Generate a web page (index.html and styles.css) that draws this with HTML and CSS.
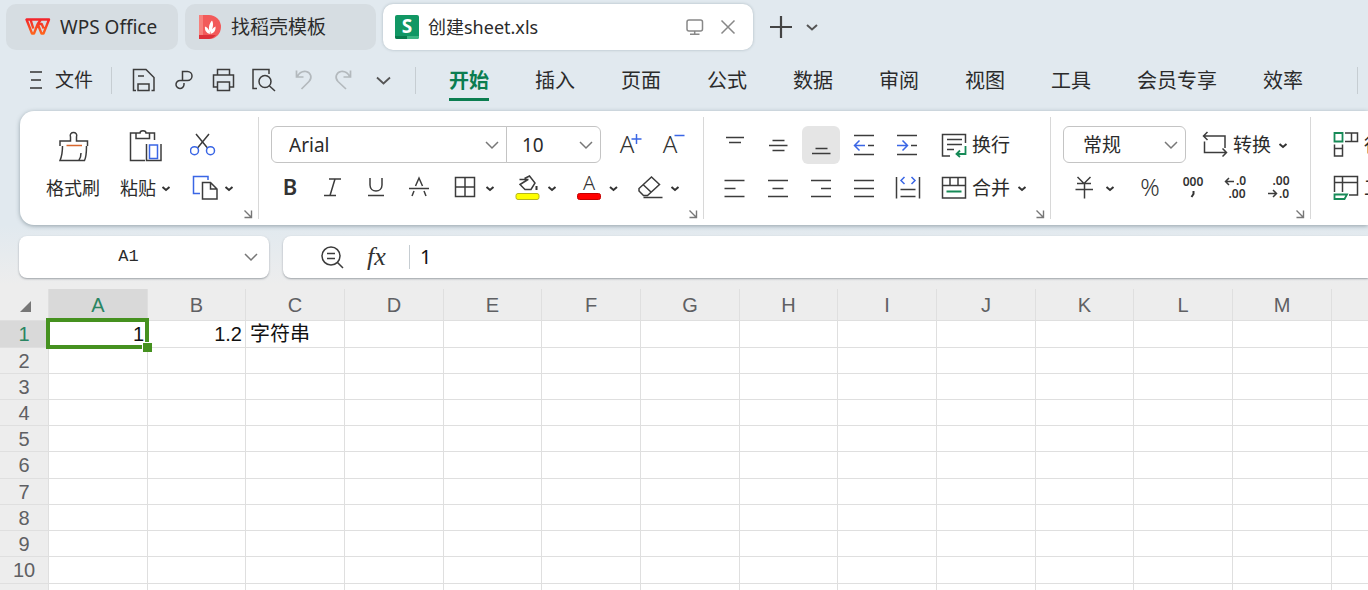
FILE: index.html
```html
<!DOCTYPE html>
<html lang="zh-CN">
<head>
<meta charset="utf-8">
<title>创建sheet.xls</title>
<link rel="stylesheet" href="styles.css">
</head>
<body>
<svg class="defs" aria-hidden="true">
  <symbol id="caret" viewBox="0 0 14 38"><path d="M3.500 18l3.500 3 3.500-3" fill="none" stroke="#333" stroke-width="2"/></symbol>
  <symbol id="drop" viewBox="0 0 14 10"><path d="M1 2l6 6 6-6" fill="none" stroke="#777" stroke-width="1.500"/></symbol>
  <symbol id="launch" viewBox="0 0 10 10"><path d="M1.500 1.500l6.500 6.500M8.500 1.500v7h-7" fill="none" stroke="#777" stroke-width="1.400"/></symbol>
</svg>

<header class="tabs">
  <button class="tab tab-home">
    <svg width="26" height="20" viewBox="0 0 26 20"><defs><linearGradient id="w" gradientUnits="userSpaceOnUse" x1="0" y1="1" x2="0" y2="18"><stop offset="0" stop-color="#f2202c"/><stop offset="1" stop-color="#ff6a1c"/></linearGradient></defs><path d="M1.500 2.500h22.500l-5.500 14h-2l-3.800-9.500-3.700 9.500h-2zM5.500 2.500l2.800 9M16 2.500l-3.300 4.500M12.700 7h4l2 4.500" fill="none" stroke="url(#w)" stroke-width="2.400" stroke-linejoin="round"/></svg>
    <span>WPS Office</span>
  </button>
  <button class="tab tab-docer">
    <svg width="24" height="26" viewBox="0 0 24 26"><path d="M1 1h10a12 12 0 0 1 0 24H1z" fill="#f25a5a"/><path d="M1 21h17a12 12 0 0 1-7 4H1z" fill="#dd3039"/><path d="M1 1h4v20H1z" fill="#f7807c"/><path d="M12 20c-4-1-5.500-4-5-7.500 3 1 4.500 3.500 5 7.500zM12 19c-2-5-1-9 2-12.500 2 3.500 1 8-2 12.500zM12.500 20c.5-4 2-6 5-7.500 .5 4-1.500 6.500-5 7.500z" fill="#fff"/></svg>
    <span>找稻壳模板</span>
  </button>
  <div class="tab tab-file">
    <svg width="24" height="24" viewBox="0 0 24 24"><rect width="24" height="24" rx="2" fill="#119764"/><path d="M0 21h12v3H2a2 2 0 0 1-2-2z" fill="#087a4c"/><path d="M12 21h12v1a2 2 0 0 1-2 2H12z" fill="#3db583"/><text x="12" y="18" class="logo-letter">S</text></svg>
    <span class="file-name">创建sheet.xls</span>
    <button class="mini" aria-label="窗口"><svg width="18" height="18" viewBox="0 0 18 18" fill="none" stroke="#888" stroke-width="1.500"><rect x="1" y="2" width="15.500" height="11" rx="2"/><path d="M8.700 13v3M4 16.200h9.500"/></svg></button>
    <button class="mini" aria-label="关闭"><svg width="18" height="18" viewBox="0 0 18 18"><path d="M2.500 2.500l13 13M15.500 2.500l-13 13" stroke="#888" stroke-width="1.500"/></svg></button>
  </div>
  <button class="mini add" aria-label="新建"><svg width="24" height="24" viewBox="0 0 24 24"><path d="M12 1v22M1 12h22" stroke="#444" stroke-width="2.200"/></svg></button>
  <button class="mini" aria-label="标签列表"><svg width="14" height="14" viewBox="0 0 14 14"><path d="M2 5l5 4.500L12 5" fill="none" stroke="#555" stroke-width="2"/></svg></button>
</header>

<nav class="menu">
  <button class="file-menu"><svg width="16" height="20" viewBox="0 0 16 20"><path d="M1 2h12M2 10h10M1 18h12" stroke="#333" stroke-width="1.500"/></svg>文件</button>
  <span class="rule"></span>
  <div class="quick">
    <button class="ib" aria-label="保存"><svg viewBox="0 0 38 38"><path d="M12 29.500H9.500V8.500H22l8 8v13h-2.500M14 29.500v-6.500h11v6.500zM14 15h6"/></svg></button>
    <button class="ib" aria-label="分享"><svg viewBox="0 0 38 38"><path d="M18.500 20V10.500h5a4.200 4.200 0 0 1 0 9h-7a4 4 0 1 0 3.500 4V22"/></svg></button>
    <button class="ib" aria-label="打印"><svg viewBox="0 0 38 38"><path d="M13.500 14V8.500h12V14M13 26H9.500V14h20v12H26M13.500 21h12v8.500h-12z"/></svg></button>
    <button class="ib" aria-label="打印预览"><svg viewBox="0 0 38 38"><path d="M13 27.500H9V8.500h16V13"/><circle cx="21" cy="20.500" r="6"/><path d="M25.500 25l5.500 5"/></svg></button>
    <button class="ib" aria-label="撤销" disabled><svg viewBox="0 0 38 38"><path class="faint" d="M12.500 9.500v6.500h7M13 16c2-4 5-6 9-5.500 5 1 6.500 6.500 3 10L17.500 28"/></svg></button>
    <button class="ib" aria-label="恢复" disabled><svg viewBox="0 0 38 38"><path class="faint" d="M26.500 9.500v6.500h-7M26 16c-2-4-5-6-9-5.500-5 1-6.500 6.500-3 10L22 28"/></svg></button>
    <button class="ib" aria-label="更多"><svg viewBox="0 0 38 38"><path class="mid" d="M13 16.500l6.500 6 6.500-6"/></svg></button>
  </div>
  <span class="rule"></span>
  <div class="menu-tabs">
    <a href="#" class="on">开始</a><a href="#">插入</a><a href="#">页面</a><a href="#">公式</a><a href="#">数据</a><a href="#">审阅</a><a href="#">视图</a><a href="#">工具</a><a href="#">会员专享</a><a href="#">效率</a>
  </div>
  <span class="rule"></span>
</nav>

<section class="ribbon">
  <div class="group clip">
    <button class="big"><svg class="i38" viewBox="0 0 38 38"><path d="M6 20v-5h10.500v-4c-2-6 8-6 6 0v4H33.500v5M8.500 20c0 6-.5 10-2.500 14.500h24.500c2-4 2-9 2-14.500M25 34c1.500-2 2-4 2-7"/><path class="orange" d="M12.500 19.500h15.500"/></svg><span>格式刷</span></button>
    <button class="big"><svg class="i38" viewBox="0 0 38 38"><path d="M10 7H4.500v27.500H19M10 7v5.500h13.500V7h-3.500c0-3-6-3-6 0zM23.500 7H28.500v7M20.500 18v16.500h14.500V18"/><path class="blue" d="M23.500 19h8v13.500h-8z"/></svg><span>粘贴<svg class="caret"><use href="#caret"/></svg></span></button>
    <div class="stack">
      <button aria-label="剪切"><svg class="i46" viewBox="0 0 46 38"><path d="M6 8l11.500 14M19 8L7.500 22"/><path class="blue" d="M8.500 24.700a4 4 0 1 1-8 0 4 4 0 0 1 8 0zM24.500 24.700a4 4 0 1 1-8 0 4 4 0 0 1 8 0z"/></svg></button>
      <button aria-label="复制"><svg class="i46" viewBox="0 0 46 38"><path class="blue" d="M10 24.500H3.500v-17h14.500V11"/><path d="M12.500 13.500h8l6.500 6.500v10H12.500zM20.500 13.500V20H27"/><path class="bold" d="M35.500 18l3.500 3 3.500-3"/></svg></button>
    </div>
    <button class="launch" aria-label="剪贴板设置"><svg width="10" height="10"><use href="#launch"/></svg></button>
  </div>

  <div class="group font">
    <div class="stack">
      <div class="row">
        <div class="pick pick-font"><select aria-label="字体"><option>Arial</option></select><svg width="14" height="10"><use href="#drop"/></svg></div>
        <div class="pick pick-size"><select aria-label="字号"><option>10</option></select><svg width="14" height="10"><use href="#drop"/></svg></div>
        <button class="ib grow" aria-label="增大字号"><svg viewBox="0 0 38 38"><text x="16" y="27" class="letter">A</text><path class="blue" d="M20.500 13h10M25.500 8v10"/></svg></button>
        <button class="ib" aria-label="减小字号"><svg viewBox="0 0 38 38"><text x="16" y="27" class="letter">A</text><path class="blue" d="M20.500 9.500h10"/></svg></button>
      </div>
      <div class="row">
        <button class="ib" aria-label="加粗"><svg viewBox="0 0 38 38"><text x="19" y="26" class="letter strong">B</text></svg></button>
        <button class="ib" aria-label="倾斜"><svg viewBox="0 0 38 38"><path d="M15 10h12M10 26.500h12M21 10l-5 16.500"/></svg></button>
        <button class="ib" aria-label="下划线"><svg viewBox="0 0 38 38"><path d="M13 9v7c0 8 12 8 12 0V9M11 26.500h16"/></svg></button>
        <button class="ib" aria-label="删除线"><svg viewBox="0 0 38 38"><path d="M15.500 17L19 9l3.500 8M9 19.500h20M14 22l-2 5M24 22l2 5"/></svg></button>
        <button class="split" aria-label="边框"><svg viewBox="0 0 57 38"><path d="M12.500 8.500h19v19h-19zM22 8.500v19M12.500 18h19"/><path class="bold" d="M43.500 18l3.500 3 3.500-3"/></svg></button>
        <button class="split" aria-label="填充颜色"><svg viewBox="0 0 57 38"><path d="M14.500 10.500h9M19.500 9.500l5-2.500 5.500 7-4 6.500h-6l-5-5 8-5"/><path class="bold" d="M31.500 17v4"/><rect x="11" y="24.500" width="23" height="6" rx="2" fill="#ff0" stroke="#b5b520"/><path class="bold" d="M43.500 18l3.500 3 3.500-3"/></svg></button>
        <button class="split" aria-label="字体颜色"><svg viewBox="0 0 57 38"><text x="22" y="21" class="letter small">A</text><rect x="10.500" y="24.500" width="23" height="6" rx="2" fill="#f00" stroke="#c30000"/><path class="bold" d="M43 18l3.500 3 3.500-3"/></svg></button>
        <button class="split" aria-label="清除"><svg viewBox="0 0 57 38"><path d="M22.500 8l8 7.500-12 11h-4l-4.500-4.500v-2.500zM14 15.500l8.500 8M14.500 28.500h19"/><path class="bold" d="M42.500 18l3.500 3 3.500-3"/></svg></button>
      </div>
    </div>
    <button class="launch" aria-label="字体设置"><svg width="10" height="10"><use href="#launch"/></svg></button>
  </div>

  <div class="group align">
    <div class="stack">
      <div class="row">
        <button class="ib" aria-label="顶端对齐"><svg viewBox="0 0 38 38"><path d="M10 11.500h18M13 16.500h12"/></svg></button>
        <button class="ib" aria-label="垂直居中"><svg viewBox="0 0 38 38"><path d="M13.500 14.500h12M10 19.500h18.500M13.500 24.500h12"/></svg></button>
        <button class="ib pressed" aria-label="底端对齐" aria-pressed="true"><svg viewBox="0 0 38 38"><path d="M13.500 22.500h12M10 27.500h18.500"/></svg></button>
        <button class="ib" aria-label="减少缩进"><svg viewBox="0 0 38 38"><path d="M9 9.500h20M9 28.500h20M23 19.500h6"/><path class="blue" d="M20 19.500H10M14.500 14.500l-5 5 5 5"/></svg></button>
        <button class="ib" aria-label="增加缩进"><svg viewBox="0 0 38 38"><path d="M9 9.500h20M9 28.500h20M23 19.500h6"/><path class="blue" d="M9 19.500h10M14.500 14.500l5 5-5 5"/></svg></button>
        <button class="labelled"><svg class="i38" viewBox="0 0 38 38"><path d="M19 30H11.500V8.500h23V17M16 13.500h15M16 18.500h15M16 23.500h7"/><path class="green" d="M34.500 20v8H26M29 24.500l-3.500 3.500 3.500 3"/></svg><span>换行</span></button>
      </div>
      <div class="row">
        <button class="ib" aria-label="左对齐"><svg viewBox="0 0 38 38"><path d="M8.500 11.500h20M8.500 19.500h11M8.500 27.500h20"/></svg></button>
        <button class="ib" aria-label="水平居中"><svg viewBox="0 0 38 38"><path d="M9 11.500h20M13.500 19.500h11M9 27.500h20"/></svg></button>
        <button class="ib" aria-label="右对齐"><svg viewBox="0 0 38 38"><path d="M9 11.500h20M19 19.500h10M9 27.500h20"/></svg></button>
        <button class="ib" aria-label="两端对齐"><svg viewBox="0 0 38 38"><path d="M9 11.500h20M9 19.500h20M9 27.500h20"/></svg></button>
        <button class="ib" aria-label="分散对齐"><svg viewBox="0 0 38 38"><path d="M8.500 8v21.500M31.500 8v21.500M12.500 20.500h15M12.500 27.500h15"/><path class="blue" d="M16.500 8L13 11.500l3.500 3.500M23.500 8l3.500 3.500-3.500 3.500"/></svg></button>
        <button class="labelled"><svg class="i38" viewBox="0 0 38 38"><path d="M11.500 8.500h23v20.500h-23zM11.500 16.500h23M19 8.500v8M27 8.500v8"/><path class="green" d="M15.500 22.500h15"/></svg><span>合并</span><svg class="caret"><use href="#caret"/></svg></button>
      </div>
    </div>
    <button class="launch" aria-label="对齐设置"><svg width="10" height="10"><use href="#launch"/></svg></button>
  </div>

  <div class="group number">
    <div class="stack">
      <div class="row">
        <div class="pick pick-format"><select aria-label="数字格式"><option>常规</option></select><svg width="14" height="10"><use href="#drop"/></svg></div>
        <button class="labelled convert"><svg class="i38" viewBox="0 0 38 38"><path d="M12.500 6l-4 4 4 4M8.500 10H30v12M9.500 15.500v11h21.500M27.500 22.500l4 4-4 4"/></svg><span>转换</span><svg class="caret"><use href="#caret"/></svg></button>
      </div>
      <div class="row">
        <button class="split wide" aria-label="货币"><svg viewBox="0 0 63 38"><path d="M14.500 8l6.500 6.500L27.500 8M14 14.500h14M12.500 20.500h17.500M21.500 14.500V29.500"/><path class="bold" d="M43.500 18l3.500 3 3.500-3"/></svg></button>
        <button class="ib" aria-label="百分比"><svg viewBox="0 0 38 38"><text x="19" y="27" class="letter">%</text></svg></button>
        <button class="ib" aria-label="千位分隔"><svg viewBox="0 0 38 38"><text x="19" y="17" class="digits">000</text><path class="bold" d="M19.500 22v3l-2 3"/></svg></button>
        <button class="ib" aria-label="增加小数位"><svg viewBox="0 0 38 38"><text x="24" y="16" class="digits">.0</text><text x="20" y="29" class="digits">.00</text><path d="M17 12.500H9M12 9l-3.500 3.500L12 16"/></svg></button>
        <button class="ib" aria-label="减少小数位"><svg viewBox="0 0 38 38"><text x="21" y="16" class="digits">.00</text><text x="24" y="29" class="digits">.0</text><path d="M8 24.500h8M13 21l3.500 3.500L13 28"/></svg></button>
      </div>
    </div>
    <button class="launch" aria-label="数字设置"><svg width="10" height="10"><use href="#launch"/></svg></button>
  </div>

  <div class="group cells">
    <div class="stack">
      <button class="labelled flush"><svg class="i38" viewBox="0 0 38 38"><path d="M19 7h12.500v8.500H19M25.500 7v8.500M8.500 18.500v11.500h8V18.500M8.500 22.500h8"/><path class="green" d="M8.500 7h8v8.500h-8z"/></svg><span>行和列</span><svg class="caret"><use href="#caret"/></svg></button>
      <button class="labelled flush"><svg class="i38" viewBox="0 0 38 38"><path d="M8.500 23V7.500h23V26H23M8.500 13.500h23M16.500 7.500v15.500"/><path class="green" d="M8.500 25.500h12.500l-2.500 4.500h-10z"/></svg><span>工作表</span><svg class="caret"><use href="#caret"/></svg></button>
    </div>
  </div>
</section>

<section class="formula">
  <div class="name-box"><input type="text" value="A1" aria-label="名称框"><svg width="14" height="10"><use href="#drop"/></svg></div>
  <div class="entry">
    <button class="ib" aria-label="查找"><svg viewBox="0 0 38 38"><circle cx="18" cy="18" r="9"/><path d="M24.500 24.500l5.500 5.500M14 15.500h8M14 20.500h8"/></svg></button>
    <button class="fx" aria-label="插入函数">fx</button>
    <span class="rule short"></span>
    <input type="text" value="1" aria-label="编辑栏">
  </div>
</section>

<main class="sheet">
  <table>
    <colgroup><col class="head"><col><col class="n"><col><col><col class="n"><col><col><col class="n"><col><col><col class="n"><col><col><col class="n"></colgroup>
    <thead>
      <tr><th class="corner"><svg width="12" height="12" viewBox="0 0 12 12"><path d="M11 0v11H0z" fill="#777"/></svg></th><th class="on">A</th><th>B</th><th>C</th><th>D</th><th>E</th><th>F</th><th>G</th><th>H</th><th>I</th><th>J</th><th>K</th><th>L</th><th>M</th><th>N</th></tr>
    </thead>
    <tbody>
      <tr class="tall"><th class="on">1</th><td class="num">1<span class="selection"></span></td><td class="num">1.2</td><td class="text">字符串</td><td></td><td></td><td></td><td></td><td></td><td></td><td></td><td></td><td></td><td></td><td></td></tr>
      <tr><th>2</th><td></td><td></td><td></td><td></td><td></td><td></td><td></td><td></td><td></td><td></td><td></td><td></td><td></td><td></td></tr>
      <tr><th>3</th><td></td><td></td><td></td><td></td><td></td><td></td><td></td><td></td><td></td><td></td><td></td><td></td><td></td><td></td></tr>
      <tr><th>4</th><td></td><td></td><td></td><td></td><td></td><td></td><td></td><td></td><td></td><td></td><td></td><td></td><td></td><td></td></tr>
      <tr><th>5</th><td></td><td></td><td></td><td></td><td></td><td></td><td></td><td></td><td></td><td></td><td></td><td></td><td></td><td></td></tr>
      <tr class="tall"><th>6</th><td></td><td></td><td></td><td></td><td></td><td></td><td></td><td></td><td></td><td></td><td></td><td></td><td></td><td></td></tr>
      <tr><th>7</th><td></td><td></td><td></td><td></td><td></td><td></td><td></td><td></td><td></td><td></td><td></td><td></td><td></td><td></td></tr>
      <tr><th>8</th><td></td><td></td><td></td><td></td><td></td><td></td><td></td><td></td><td></td><td></td><td></td><td></td><td></td><td></td></tr>
      <tr><th>9</th><td></td><td></td><td></td><td></td><td></td><td></td><td></td><td></td><td></td><td></td><td></td><td></td><td></td><td></td></tr>
      <tr class="tall"><th>10</th><td></td><td></td><td></td><td></td><td></td><td></td><td></td><td></td><td></td><td></td><td></td><td></td><td></td><td></td></tr>
      <tr><th>11</th><td></td><td></td><td></td><td></td><td></td><td></td><td></td><td></td><td></td><td></td><td></td><td></td><td></td><td></td></tr>
    </tbody>
  </table>
</main>
</body>
</html>
```

FILE: styles.css
```css
* { box-sizing: border-box; }
body {
  margin: 0;
  height: 100vh;
  overflow: hidden;
  display: flex;
  flex-direction: column;
  font-family: "Noto Sans", "Noto Sans CJK SC", sans-serif;
  font-size: 19px;
  line-height: 28px;
  color: #2b2b2b;
  background: linear-gradient(#e1e9ef 0, #e1e9ef 225px, #ededed 285px);
}
.defs { position: absolute; width: 0; height: 0; }
button {
  margin: 0;
  padding: 0;
  border: 0;
  background: none;
  font: inherit;
  color: inherit;
  display: flex;
  align-items: center;
}
svg { display: block; flex: none; }
input, select { font: inherit; color: inherit; border: 0; outline: 0; background: none; min-width: 0; }

/* document tabs */
.tabs { display: flex; align-items: center; gap: 7px; padding: 4px 0 4px 6px; flex: none; }
.tab { height: 46px; border-radius: 10px; background: #d6dde2; gap: 9px; font-size: 18px; }
.tab-home { width: 172px; padding-left: 19px; font-size: 19px; }
.tab-docer { width: 191px; padding-left: 13px; font-size: 19px; }
.tab-file {
  display: flex;
  align-items: center;
  width: 370px;
  padding: 0 16px 0 12px;
  background: #fff;
  box-shadow: 0 0 3px rgba(90, 110, 120, .4);
}
.file-name { flex: 1; white-space: nowrap; }
.mini { flex: none; }
.tab-file .mini + .mini { margin-left: 6px; }
.add { margin: 0 5px 0 9px; }

/* menu bar */
.menu { display: flex; align-items: center; height: 52px; flex: none; padding-left: 29px; }
.file-menu { gap: 10px; }
.rule { width: 1px; height: 27px; background: #c6cdd2; flex: none; }
.file-menu + .rule { margin: 0 12px 0 18px; }
.quick { display: flex; gap: 2px; }
.quick + .rule { margin: 0 33px 0 13px; }
.menu-tabs { display: flex; gap: 46px; margin-right: 54px; font-size: 20px; }
.menu-tabs a { flex: none; color: inherit; text-decoration: none; padding-top: 4px; border-bottom: 3px solid transparent; line-height: 34px; }
.menu-tabs .on { color: #0b7d50; font-weight: 700; border-color: #0b7d50; }

/* icon buttons */
.ib, .ib svg { width: 38px; height: 38px; flex: none; }
.split, .split svg { width: 57px; height: 38px; flex: none; }
.wide, .wide svg { width: 63px; }
.i38 { width: 38px; height: 38px; }
.i46 { width: 46px; height: 38px; }
.caret { width: 14px; height: 38px; }
.ib path, .split path, .i38 path, .i46 path, .ib circle { fill: none; stroke: #3c3c3c; stroke-width: 1.5; }
.ib .faint { stroke: #b3b9bd; stroke-width: 1.7; }
.ib .mid { stroke: #555; stroke-width: 1.8; }
.ribbon .bold { stroke: #333; stroke-width: 2; }
.ribbon .blue { stroke: #3a66e5; }
.ribbon .green { stroke: #168a57; stroke-width: 1.8; }
.ribbon .orange { stroke: #d8662d; }
.letter { font-size: 24px; font-weight: 300; text-anchor: middle; fill: #333; }
.small { font-size: 20px; }
.strong { font-size: 22px; font-weight: 600; }
.digits { font-size: 12px; font-weight: 600; text-anchor: middle; fill: #333; }
.logo-letter { font-size: 19px; font-weight: 700; text-anchor: middle; fill: #fff; }

/* ribbon */
.ribbon {
  display: flex;
  flex: none;
  margin: 5px 0 0 20px;
  padding: 6px 0;
  overflow: hidden;
  background: #fff;
  border-radius: 14px 0 0 14px;
  box-shadow: 0 1px 4px rgba(70, 90, 100, .5);
}
.group {
  position: relative;
  display: flex;
  flex: none;
  padding: 9px 12px 12px 12px;
  border-right: 1px solid #d8d8d8;
}
.clip { gap: 20px; padding-left: 26px; padding-right: 22px; }
.font { padding-right: 11px; }
.align { padding-right: 21px; }
.cells { padding-left: 15px; border: 0; }
.stack, .big { display: flex; flex-direction: column; gap: 5px; }
.row { display: flex; gap: 5px; }
.big { font-size: 18px; }
.big span { display: flex; align-items: center; height: 38px; }
.big .caret { margin: 0 -3px 0 3px; }
.labelled { height: 38px; }
.labelled span { margin: 0 5px 0 3px; white-space: nowrap; }
.convert { margin-left: 4px; }
.convert span, .flush span { margin-left: 0; }
.pressed { background: #e5e5e5; border-radius: 6px; }
.launch { position: absolute; right: 5px; bottom: 0; }

.pick {
  display: flex;
  align-items: center;
  height: 37px;
  padding-right: 7px;
  border: 1px solid #c4c4c4;
  border-radius: 6px;
}
.pick select { flex: 1; appearance: none; height: 35px; padding: 0 0 0 17px; }
.pick-font { width: 236px; border-radius: 6px 0 0 6px; margin-right: -6px; }
.pick-size { width: 95px; border-radius: 0 6px 6px 0; }
.pick-size select { padding-left: 15px; }
.pick-format { width: 123px; }
.pick-format select { padding-left: 19px; }
.grow { margin-left: 5px; }

/* formula bar */
.formula { display: flex; flex: none; gap: 14px; margin: 11px 0 11px 19px; height: 42px; }
.name-box, .entry {
  display: flex;
  align-items: center;
  background: #fff;
  border-radius: 8px;
  box-shadow: 0 1px 2px rgba(80, 90, 100, .5);
}
.name-box { width: 250px; padding-right: 11px; }
.name-box input { flex: 1; text-align: center; padding: 0 6px 0 0; font-family: "Liberation Mono", monospace; font-size: 17px; }
.entry { flex: 1; padding-left: 30px; border-radius: 8px 0 0 8px; }
.entry input { flex: 1; padding: 0 0 0 10px; font-size: 20px; color: #111; }
.fx { margin-left: 16px; width: 26px; font: italic 26px/30px "Liberation Serif", serif; color: #333; }
.short { margin-left: 16px; height: 24px; }

/* grid */
.sheet { flex: 1; overflow: hidden; font-family: "Liberation Sans", "Noto Sans CJK SC", sans-serif; font-size: 20px; line-height: 24px; }
table { width: 1430px; table-layout: fixed; border-collapse: separate; border-spacing: 0; background: #fff; }
col { width: 99px; }
.n { width: 98px; }
.head { width: 49px; }
th, td { height: 26px; padding: 0; border-right: 1px solid #dfdfdf; border-bottom: 1px solid #dfdfdf; }
.tall th, .tall td { height: 27px; }
th { font-weight: 400; color: #5f6063; background: #ededed; }
thead th { height: 32px; }
.corner svg { margin: 4px 0 0 20px; }
.on { color: #2a8562; }
th.on { background: #d9d9d9; }
td { position: relative; color: #111; }
.num { text-align: right; padding-right: 3px; }
.text { padding-left: 4px; }
.selection { position: absolute; inset: -3px -2px -2px -3px; border: 4px solid #45911f; z-index: 1; }
.selection::after {
  content: "";
  position: absolute;
  right: -7px;
  bottom: -7px;
  width: 9px;
  height: 9px;
  background: #45911f;
  border: 1px solid #fff;
  border-width: 1px 0 0 1px;
}
```
